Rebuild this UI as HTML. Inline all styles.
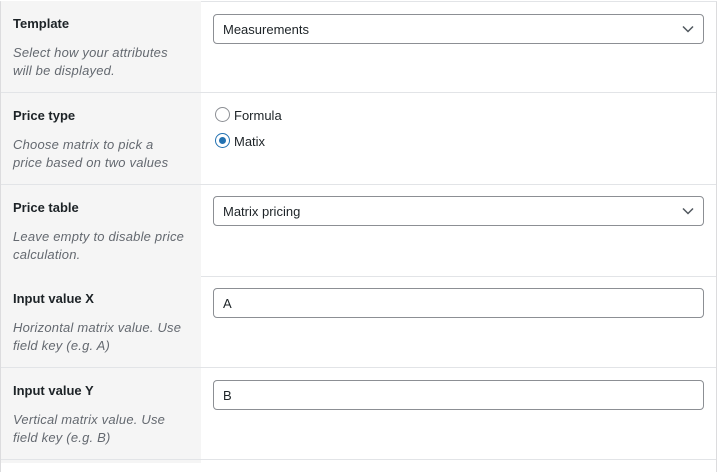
<!DOCTYPE html>
<html><head><style>
body{margin:0;width:717px;height:463px;background:#fff;font-family:"Liberation Sans",sans-serif;font-size:13px;color:#1d2327;overflow:hidden;position:relative}
.frame{position:absolute;left:0;top:1px;width:715px;height:470px;border-left:1px solid #dcdcde;border-right:1px solid #dcdcde;border-top:1px solid #e2e4e7}
.row{position:absolute;left:1px;width:715px;height:91px;border-bottom:1px solid #e2e4e7}
.th{position:absolute;left:0;top:0;width:200px;height:100%;background:#f5f5f5}
.lbl{position:absolute;left:12px;top:15px;font-weight:bold;font-size:13px}
.desc{position:absolute;left:12px;top:43px;font-style:italic;color:#646970;line-height:18px;white-space:nowrap;letter-spacing:0.2px}
.ctl{position:absolute;left:212px;top:14px;width:489px;height:28px;border:1px solid #8c8f94;border-radius:4px;background:#fff;box-sizing:content-box}
.ctl span{position:absolute;left:9px;top:7px}
.ctl svg{position:absolute;right:9px;top:10px}
.radio{position:absolute;left:214px;width:13px;height:13px;border:1px solid #8c8f94;border-radius:50%;background:#fff}
.rl{position:absolute;left:233px}
</style></head><body>
<div class="frame"></div>
<div class="row" style="top:1px"><div class="th"><div class="lbl">Template</div><div class="desc">Select how your attributes<br>will be displayed.</div></div>
<div class="ctl" style="top:13px"><span>Measurements</span><svg width="12" height="8"><path d="M1 1.5L6 6.5L11 1.5" stroke="#50575e" stroke-width="1.5" fill="none"/></svg></div></div>
<div class="row" style="top:93px"><div class="th"><div class="lbl">Price type</div><div class="desc">Choose matrix to pick a<br>price based on two values</div></div>
<div class="radio" style="top:14px"></div><div class="rl" style="top:15px">Formula</div>
<div class="radio" style="top:40px;border-color:#2271b1"><div style="position:absolute;left:3px;top:3px;width:7px;height:7px;border-radius:50%;background:#2271b1"></div></div><div class="rl" style="top:41px">Matix</div></div>
<div class="row" style="top:185px"><div class="th"><div class="lbl">Price table</div><div class="desc">Leave empty to disable price<br>calculation.</div></div>
<div class="ctl" style="top:11px"><span>Matrix pricing</span><svg width="12" height="8"><path d="M1 1.5L6 6.5L11 1.5" stroke="#50575e" stroke-width="1.5" fill="none"/></svg></div></div>
<div class="row" style="top:276px"><div class="th"><div class="lbl">Input value X</div><div class="desc">Horizontal matrix value. Use<br>field key (e.g. A)</div></div>
<div class="ctl" style="top:12px"><span>A</span></div></div>
<div class="row" style="top:368px"><div class="th"><div class="lbl">Input value Y</div><div class="desc">Vertical matrix value. Use<br>field key (e.g. B)</div></div>
<div class="ctl" style="top:12px"><span>B</span></div></div>
<div style="position:absolute;left:1px;top:460px;width:200px;height:3px;background:#f5f5f5"></div>
</body></html>
